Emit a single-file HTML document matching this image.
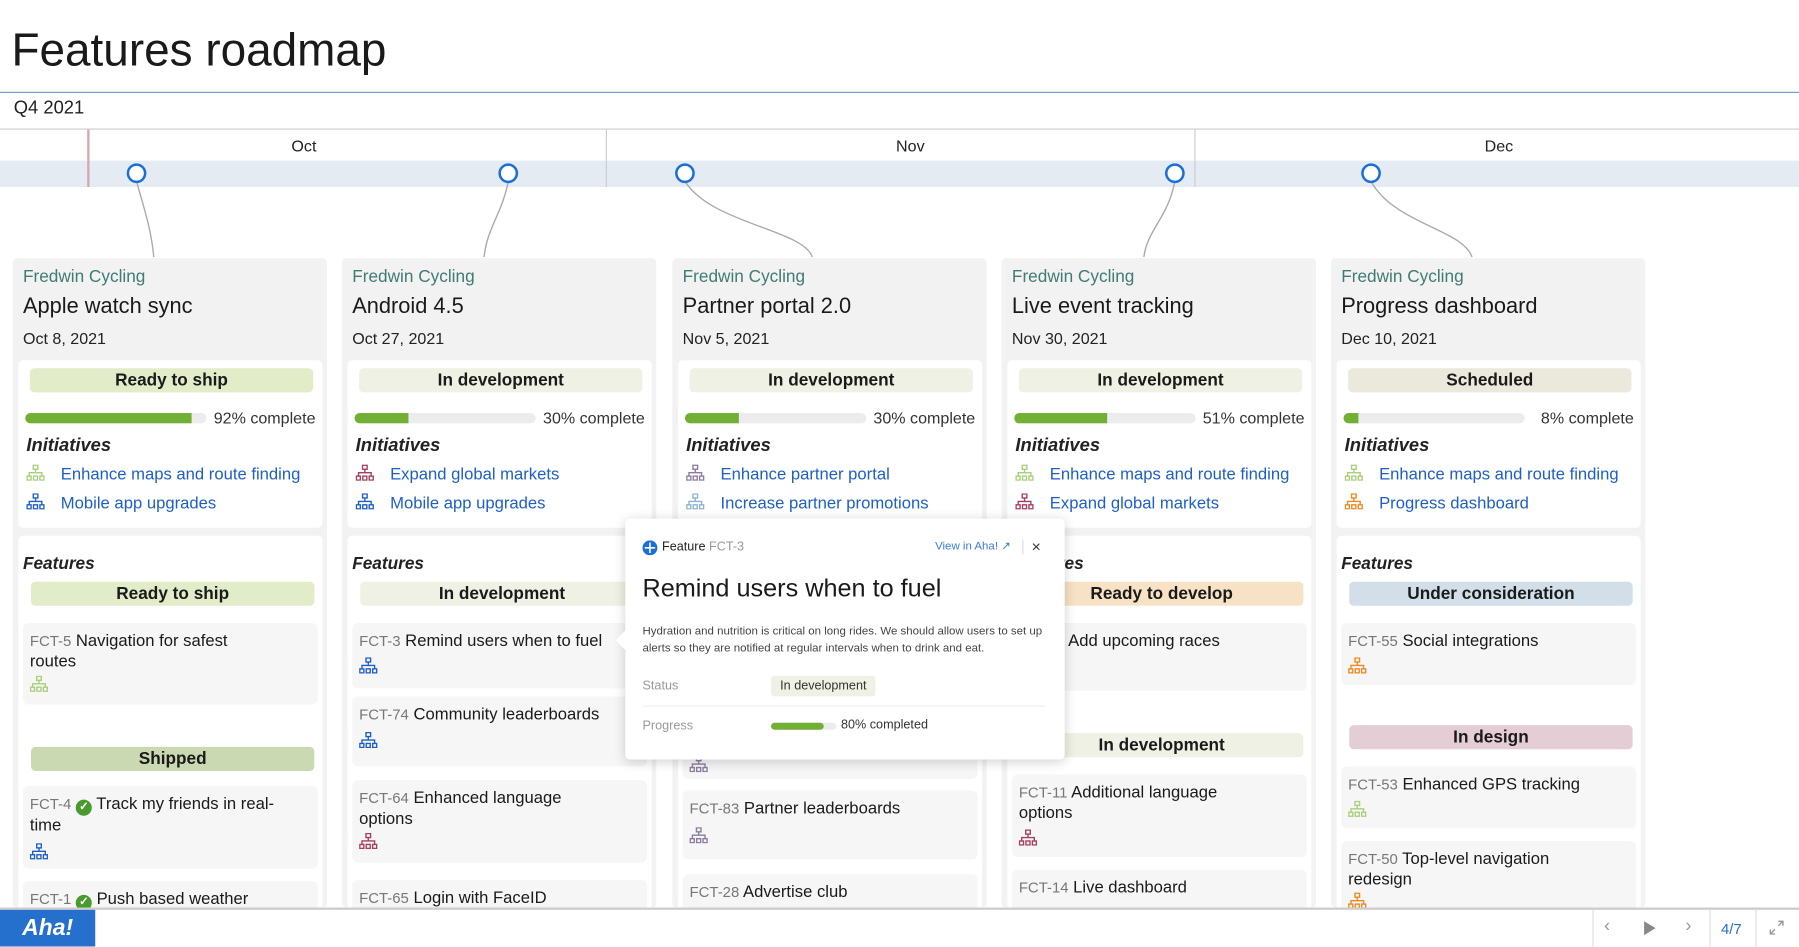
<!DOCTYPE html>
<html><head><meta charset="utf-8"><style>
html,body{margin:0;padding:0;width:1799px;height:947px;overflow:hidden;background:#fff}
#s{position:absolute;left:0;top:0;width:1568px;height:825px;transform:scale(1.14732);transform-origin:0 0;font-family:"Liberation Sans",Arial,sans-serif;color:#222;overflow:hidden}
.a{position:absolute}
.card{position:absolute;top:225px;width:274px;height:566px;background:#f2f2f2;border-radius:4px;overflow:hidden}
.org{position:absolute;left:9px;top:8px;font-size:15px;color:#3f7c72}
.ttl{position:absolute;left:9px;top:32px;font-size:19px;color:#1a1a1a}
.dt{position:absolute;left:9px;top:62px;font-size:14px;color:#222}
.box{position:absolute;left:5px;top:89px;width:265px;height:146px;background:#fff;border-radius:4px}
.pill{position:absolute;height:21px;line-height:21px;text-align:center;font-weight:bold;font-size:15px;border-radius:4px;color:#1a1a1a}
.bar{position:absolute;left:6px;top:46px;width:158px;height:9px;background:#ececec;border-radius:5px;overflow:hidden}
.bar i{display:block;height:100%;background:#72b034}
.pct{position:absolute;right:6px;top:42px;font-size:14px;color:#333}
.ini{position:absolute;left:7px;top:66px;font-size:16px;font-weight:bold;font-style:italic}
.lk{position:absolute;left:37px;font-size:14.5px;color:#1d5fc7}
.ic{position:absolute;left:7px}
.fbox{position:absolute;left:5px;top:242px;width:265px;height:400px;background:#fff;border-radius:4px}
.fh{position:absolute;left:4px;top:16px;font-size:15px;font-weight:bold;font-style:italic}
.fc{position:absolute;left:4px;width:257px;background:#f6f6f6;border-radius:5px;font-size:14.5px;color:#1a1a1a}
.fc .t{position:absolute;left:6px;top:7px;width:230px;line-height:18px}
.fc .t b{font-weight:normal;color:#777;font-size:13px}
.fc svg{position:absolute;left:6px}
.chk{display:inline-block;width:14px;height:14px;border-radius:50%;background:#4a9a2e;color:#fff;font-size:10px;line-height:14px;text-align:center;vertical-align:-1px;font-weight:bold}
</style></head><body><div id="s">
<svg width="0" height="0" style="position:absolute"><defs>
<g id="org"><rect x="6" y="0.5" width="4" height="3.5" fill="none" stroke="currentColor" stroke-width="1.2"/><path d="M8 4v3M2.5 10V7h11v3" fill="none" stroke="currentColor" stroke-width="1.2"/><rect x="0.6" y="10" width="3.5" height="3.5" fill="none" stroke="currentColor" stroke-width="1.2"/><rect x="6.2" y="10" width="3.5" height="3.5" fill="none" stroke="currentColor" stroke-width="1.2"/><rect x="11.8" y="10" width="3.5" height="3.5" fill="none" stroke="currentColor" stroke-width="1.2"/></g>
</defs></svg>

<div class="a" style="left:10px;top:22px;font-size:40px;color:#1a1a1a">Features roadmap</div>
<div class="a" style="left:0;top:80px;width:1568px;height:1px;background:#6f93cc"></div>
<div class="a" style="left:12px;top:86px;font-size:16px;color:#222">Q4 2021</div>
<div class="a" style="left:0;top:112px;width:1568px;height:1px;background:#ccc"></div>
<div class="a" style="left:0;top:140px;width:1568px;height:23px;background:#e5ebf2"></div>
<div class="a" style="left:76px;top:113px;width:2px;height:50px;background:#d9a5ad"></div>
<div class="a" style="left:528px;top:113px;width:1px;height:50px;background:#ccc"></div>
<div class="a" style="left:1041px;top:113px;width:1px;height:50px;background:#ccc"></div>
<div class="a" style="left:254px;top:119px;font-size:14px">Oct</div>
<div class="a" style="left:781px;top:119px;font-size:14px">Nov</div>
<div class="a" style="left:1294px;top:119px;font-size:14px">Dec</div>
<svg class="a" style="left:0;top:0" width="1568" height="230">
<g fill="none" stroke="#aaa" stroke-width="1.2">
<path d="M119 158 C125 180 132 200 134 224"/><path d="M443 158 C438 185 424 200 422 224"/><path d="M597 158 C620 195 700 200 708 224"/><path d="M1024 158 C1018 190 1000 200 997 224"/><path d="M1195 158 C1215 195 1275 200 1283 224"/></g>
<g fill="#fff" stroke="#1b6fd6" stroke-width="2.2"><circle cx="119" cy="151" r="7.5"/><circle cx="443" cy="151" r="7.5"/><circle cx="597" cy="151" r="7.5"/><circle cx="1024" cy="151" r="7.5"/><circle cx="1195" cy="151" r="7.5"/></g>
</svg>

<!-- Card 1 -->
<div class="card" style="left:11px">
<div class="org">Fredwin Cycling</div><div class="ttl">Apple watch sync</div><div class="dt">Oct 8, 2021</div>
<div class="box"><div class="pill" style="left:10px;top:7px;width:247px;background:#e3ecc9">Ready to ship</div>
<div class="bar"><i style="width:92%"></i></div><div class="pct">92% complete</div>
<div class="ini">Initiatives</div>
<svg class="ic" style="top:91px;color:#a8cf7a" width="16" height="14"><use href="#org"/></svg><div class="lk" style="top:92px">Enhance maps and route finding</div>
<svg class="ic" style="top:116px;color:#1d5fc7" width="16" height="14"><use href="#org"/></svg><div class="lk" style="top:117px">Mobile app upgrades</div></div>
<div class="fbox"><div class="fh">Features</div>
<div class="pill" style="left:11px;top:40px;width:247px;background:#e3ecc9">Ready to ship</div>
<div class="fc" style="top:76px;height:71px"><div class="t" style="width:185px"><b>FCT-5</b> Navigation for safest routes</div><svg style="top:46px;color:#a8cf7a" width="16" height="14"><use href="#org"/></svg></div>
<div class="pill" style="left:11px;top:184px;width:247px;background:#cad9b1">Shipped</div>
<div class="fc" style="top:218px;height:72px"><div class="t" style="width:225px"><b>FCT-4</b> <span class="chk">✓</span> Track my friends in real-time</div><svg style="top:50px;color:#1d5fc7" width="16" height="14"><use href="#org"/></svg></div>
<div class="fc" style="top:301px;height:71px"><div class="t"><b>FCT-1</b> <span class="chk">✓</span> Push based weather</div></div>
</div></div>

<!-- Card 2 -->
<div class="card" style="left:298px">
<div class="org">Fredwin Cycling</div><div class="ttl">Android 4.5</div><div class="dt">Oct 27, 2021</div>
<div class="box"><div class="pill" style="left:10px;top:7px;width:247px;background:#eef1e3">In development</div>
<div class="bar"><i style="width:30%"></i></div><div class="pct">30% complete</div>
<div class="ini">Initiatives</div>
<svg class="ic" style="top:91px;color:#a3405e" width="16" height="14"><use href="#org"/></svg><div class="lk" style="top:92px">Expand global markets</div>
<svg class="ic" style="top:116px;color:#1d5fc7" width="16" height="14"><use href="#org"/></svg><div class="lk" style="top:117px">Mobile app upgrades</div></div>
<div class="fbox"><div class="fh">Features</div>
<div class="pill" style="left:11px;top:40px;width:247px;background:#eef1e3">In development</div>
<div class="fc" style="top:76px;height:57px"><div class="t"><b>FCT-3</b> Remind users when to fuel</div><svg style="top:30px;color:#1d5fc7" width="16" height="14"><use href="#org"/></svg></div>
<div class="fc" style="top:140px;height:61px"><div class="t"><b>FCT-74</b> Community leaderboards</div><svg style="top:31px;color:#1d5fc7" width="16" height="14"><use href="#org"/></svg></div>
<div class="fc" style="top:213px;height:72px"><div class="t" style="width:190px"><b>FCT-64</b> Enhanced language options</div><svg style="top:46px;color:#a3405e" width="16" height="14"><use href="#org"/></svg></div>
<div class="fc" style="top:300px;height:71px"><div class="t"><b>FCT-65</b> Login with FaceID</div></div>
</div></div>

<!-- Card 3 -->
<div class="card" style="left:586px">
<div class="org">Fredwin Cycling</div><div class="ttl">Partner portal 2.0</div><div class="dt">Nov 5, 2021</div>
<div class="box"><div class="pill" style="left:10px;top:7px;width:247px;background:#eef1e3">In development</div>
<div class="bar"><i style="width:30%"></i></div><div class="pct">30% complete</div>
<div class="ini">Initiatives</div>
<svg class="ic" style="top:91px;color:#8b7ba0" width="16" height="14"><use href="#org"/></svg><div class="lk" style="top:92px">Enhance partner portal</div>
<svg class="ic" style="top:116px;color:#8fb3d0" width="16" height="14"><use href="#org"/></svg><div class="lk" style="top:117px">Increase partner promotions</div></div>
<div class="fbox"><div class="fh">Features</div>
<div class="fc" style="top:150px;height:62px"><svg style="top:42px;color:#8b7ba0" width="16" height="14"><use href="#org"/></svg></div>
<div class="fc" style="top:222px;height:60px"><div class="t"><b>FCT-83</b> Partner leaderboards</div><svg style="top:32px;color:#8b7ba0" width="16" height="14"><use href="#org"/></svg></div>
<div class="fc" style="top:295px;height:71px"><div class="t"><b>FCT-28</b> Advertise club</div></div>
</div></div>

<!-- Card 4 -->
<div class="card" style="left:873px">
<div class="org">Fredwin Cycling</div><div class="ttl">Live event tracking</div><div class="dt">Nov 30, 2021</div>
<div class="box"><div class="pill" style="left:10px;top:7px;width:247px;background:#eef1e3">In development</div>
<div class="bar"><i style="width:51%"></i></div><div class="pct">51% complete</div>
<div class="ini">Initiatives</div>
<svg class="ic" style="top:91px;color:#a8cf7a" width="16" height="14"><use href="#org"/></svg><div class="lk" style="top:92px">Enhance maps and route finding</div>
<svg class="ic" style="top:116px;color:#a3405e" width="16" height="14"><use href="#org"/></svg><div class="lk" style="top:117px">Expand global markets</div></div>
<div class="fbox"><div class="fh">Features</div>
<div class="pill" style="left:11px;top:40px;width:247px;background:#f8e2c5">Ready to develop</div>
<div class="fc" style="top:76px;height:59px"><div class="t" style="left:49px">Add upcoming races</div></div>
<div class="pill" style="left:11px;top:172px;width:247px;background:#eef1e3">In development</div>
<div class="fc" style="top:208px;height:72px"><div class="t" style="width:190px"><b>FCT-11</b> Additional language options</div><svg style="top:48px;color:#a3405e" width="16" height="14"><use href="#org"/></svg></div>
<div class="fc" style="top:291px;height:71px"><div class="t"><b>FCT-14</b> Live dashboard</div></div>
</div></div>

<!-- Card 5 -->
<div class="card" style="left:1160px">
<div class="org">Fredwin Cycling</div><div class="ttl">Progress dashboard</div><div class="dt">Dec 10, 2021</div>
<div class="box"><div class="pill" style="left:10px;top:7px;width:247px;background:#ebe8dc">Scheduled</div>
<div class="bar"><i style="width:8%"></i></div><div class="pct">8% complete</div>
<div class="ini">Initiatives</div>
<svg class="ic" style="top:91px;color:#a8cf7a" width="16" height="14"><use href="#org"/></svg><div class="lk" style="top:92px">Enhance maps and route finding</div>
<svg class="ic" style="top:116px;color:#ec8a1f" width="16" height="14"><use href="#org"/></svg><div class="lk" style="top:117px">Progress dashboard</div></div>
<div class="fbox"><div class="fh">Features</div>
<div class="pill" style="left:11px;top:40px;width:247px;background:#d2dfe8">Under consideration</div>
<div class="fc" style="top:76px;height:54px"><div class="t"><b>FCT-55</b> Social integrations</div><svg style="top:30px;color:#ec8a1f" width="16" height="14"><use href="#org"/></svg></div>
<div class="pill" style="left:11px;top:165px;width:247px;background:#e5cdd6">In design</div>
<div class="fc" style="top:201px;height:54px"><div class="t"><b>FCT-53</b> Enhanced GPS tracking</div><svg style="top:30px;color:#a8cf7a" width="16" height="14"><use href="#org"/></svg></div>
<div class="fc" style="top:266px;height:71px"><div class="t" style="width:200px"><b>FCT-50</b> Top-level navigation redesign</div><svg style="top:45px;color:#ec8a1f" width="16" height="14"><use href="#org"/></svg></div>
</div></div>

<!-- Popup -->
<div class="a" style="left:545px;top:452px;width:383px;height:210px;background:#fff;border-radius:4px;box-shadow:0 2px 10px rgba(0,0,0,.18)">
<div class="a" style="left:-6px;top:100px;width:12px;height:12px;background:#fff;transform:rotate(45deg)"></div>
<svg class="a" style="left:15px;top:19px" width="13" height="13"><circle cx="6.5" cy="6.5" r="6.5" fill="#1d6fd6"/><path d="M6.5 2v9M2 6.5h9" stroke="#fff" stroke-width="1.4"/></svg>
<div class="a" style="left:32px;top:19px;font-size:11px;color:#222">Feature <span style="color:#999">FCT-3</span></div>
<div class="a" style="left:270px;top:19px;font-size:10px;color:#3a7bd5">View in Aha! ↗</div>
<div class="a" style="left:346px;top:18px;width:1px;height:13px;background:#ddd"></div>
<div class="a" style="left:354px;top:16px;font-size:14px;color:#333">×</div>
<div class="a" style="left:15px;top:48px;font-size:22px;color:#1a1a1a">Remind users when to fuel</div>
<div class="a" style="left:15px;top:91px;width:360px;font-size:10px;line-height:15px;color:#444">Hydration and nutrition is critical on long rides. We should allow users to set up alerts so they are notified at regular intervals when to drink and eat.</div>
<div class="a" style="left:15px;top:140px;font-size:11px;color:#999">Status</div>
<div class="a" style="left:127px;top:137px;padding:0 8px;height:18px;line-height:18px;background:#eef1e3;border-radius:3px;font-size:11px;color:#333">In development</div>
<div class="a" style="left:15px;top:163px;width:352px;height:1px;background:#eee"></div>
<div class="a" style="left:15px;top:175px;font-size:11px;color:#999">Progress</div>
<div class="a" style="left:127px;top:178px;width:57px;height:6px;background:#ececec;border-radius:3px"><div style="width:80%;height:100%;background:#72b034;border-radius:3px"></div></div>
<div class="a" style="left:188px;top:174px;font-size:11px;color:#333">80% completed</div>
</div>

<!-- Bottom bar -->
<div class="a" style="left:0;top:791px;width:1568px;height:32px;background:#fff;border-top:2px solid #ccc"></div>
<div class="a" style="left:0;top:793px;width:83px;height:32px;background:#2470cc;color:#fff;font-weight:bold;font-size:20px;line-height:32px;text-align:center;font-style:italic">Aha!</div>
<div class="a" style="left:1388px;top:793px;width:1px;height:32px;background:#ddd"></div>
<div class="a" style="left:1490px;top:793px;width:1px;height:32px;background:#ddd"></div>
<div class="a" style="left:1530px;top:793px;width:1px;height:32px;background:#ddd"></div>
<div class="a" style="left:1398px;top:799px;font-size:16px;color:#999">‹</div>
<svg class="a" style="left:1432px;top:802px" width="12" height="14"><path d="M1 1L11 7L1 13Z" fill="#888"/></svg>
<div class="a" style="left:1469px;top:799px;font-size:16px;color:#999">›</div>
<div class="a" style="left:1500px;top:802px;font-size:13px;color:#2470cc">4/7</div>
<svg class="a" style="left:1542px;top:802px" width="13" height="13"><path d="M8 1h4v4M12 1L8 5M5 12H1V8M1 12l4-4" fill="none" stroke="#999" stroke-width="1.2"/></svg>
</div></body></html>
